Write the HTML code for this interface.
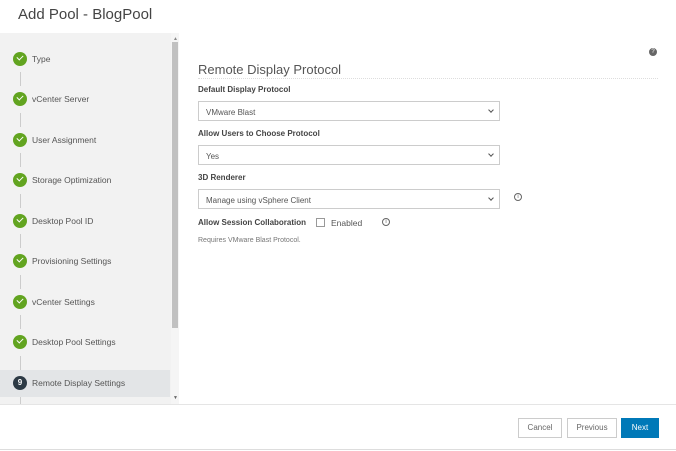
<!DOCTYPE html>
<html><head><style>
*{box-sizing:border-box;margin:0;padding:0}
body{width:676px;height:451px;background:#fff;font-family:"Liberation Sans",sans-serif;position:relative;overflow:hidden;color:#333}
.hdr{position:absolute;left:18px;top:6px;font-size:15px;color:#444}
.left{position:absolute;left:0;top:33px;width:171px;height:371px;background:#f2f2f2}
.sb{position:absolute;left:171px;top:33px;width:8px;height:371px;background:#f5f5f5}
.thumb{position:absolute;left:172px;top:42px;width:6px;height:286px;background:#c1c1c1}
.step{position:absolute;left:0;width:170px;height:26px;font-size:8.5px;color:#555}
.step .c{position:absolute;left:13px;top:6px;width:14px;height:14px;border-radius:50%;background:#62a420}
.step .c:after{content:"";position:absolute;left:4px;top:3px;width:5px;height:3px;border-left:1.3px solid #fff;border-bottom:1.3px solid #fff;transform:rotate(-45deg)}
.step span{position:absolute;left:32px;top:8px}
.ln{position:absolute;left:20px;width:1px;height:14px;background:#ccc}
.act{background:#e3e5e7}
.act .c{background:#2d3a45}
.act .c:after{display:none}
.act .c b{position:absolute;width:14px;text-align:center;top:2px;color:#fff;font-size:8px}
.title{position:absolute;left:198px;top:62px;font-size:13px;color:#555}
.dl{position:absolute;left:198px;top:78px;width:460px;border-top:1px dotted #ddd}
.lab{position:absolute;left:198px;font-size:8px;font-weight:bold;color:#444}
.sel{position:absolute;left:198px;width:302px;height:20px;border:1px solid #ccc;font-size:8px;color:#555;padding:6px 7px}
.sel:after{content:"";position:absolute;right:6px;top:6px;width:3px;height:3px;border-right:1px solid #555;border-bottom:1px solid #555;transform:rotate(45deg)}
.i{position:absolute;width:8px;height:8px;border:1px solid #666;border-radius:50%;font-size:6px;text-align:center;line-height:6px;color:#666}
.btn{position:absolute;top:418px;height:20px;border:1px solid #ccc;font-size:8px;color:#666;text-align:center;line-height:18px;background:#fff}
</style></head><body>
<div class="hdr">Add Pool - BlogPool</div>
<div class="left"></div>
<div class="sb"></div><div class="thumb"></div>
<div style="position:absolute;left:173px;top:36px;font-size:5px;color:#888">▲</div>
<div style="position:absolute;left:173px;top:395px;font-size:5px;color:#666">▼</div>
<div class="step" style="top:46px"><div class="c"></div><span>Type</span></div>
<div class="ln" style="top:72px"></div>
<div class="step" style="top:86px"><div class="c"></div><span>vCenter Server</span></div>
<div class="ln" style="top:113px"></div>
<div class="step" style="top:127px"><div class="c"></div><span>User Assignment</span></div>
<div class="ln" style="top:153px"></div>
<div class="step" style="top:167px"><div class="c"></div><span>Storage Optimization</span></div>
<div class="ln" style="top:194px"></div>
<div class="step" style="top:208px"><div class="c"></div><span>Desktop Pool ID</span></div>
<div class="ln" style="top:234px"></div>
<div class="step" style="top:248px"><div class="c"></div><span>Provisioning Settings</span></div>
<div class="ln" style="top:275px"></div>
<div class="step" style="top:289px"><div class="c"></div><span>vCenter Settings</span></div>
<div class="ln" style="top:315px"></div>
<div class="step" style="top:329px"><div class="c"></div><span>Desktop Pool Settings</span></div>
<div class="ln" style="top:356px"></div>
<div class="step act" style="top:370px;height:27px"><div class="c"><b>9</b></div><span>Remote Display Settings</span></div>
<div class="ln" style="top:397px;height:7px"></div>
<div class="i" style="left:649px;top:48px;background:#666;color:#fff;border-color:#666">?</div>
<div class="title">Remote Display Protocol</div>
<div class="dl"></div>
<div class="lab" style="top:85px">Default Display Protocol</div>
<div class="sel" style="top:101px">VMware Blast</div>
<div class="lab" style="top:129px">Allow Users to Choose Protocol</div>
<div class="sel" style="top:145px">Yes</div>
<div class="lab" style="top:173px">3D Renderer</div>
<div class="sel" style="top:189px">Manage using vSphere Client</div>
<div class="i" style="left:514px;top:193px">i</div>
<div class="lab" style="top:218px">Allow Session Collaboration</div>
<div style="position:absolute;left:316px;top:218px;width:9px;height:9px;border:1px solid #999"></div>
<div style="position:absolute;left:331px;top:218px;font-size:8.5px;color:#555">Enabled</div>
<div class="i" style="left:382px;top:218px">i</div>
<div style="position:absolute;left:198px;top:237px;font-size:7px;color:#777">Requires VMware Blast Protocol.</div>
<div style="position:absolute;left:0;top:404px;width:676px;border-top:1px solid #e5e5e5"></div>
<div class="btn" style="left:518px;width:44px">Cancel</div>
<div class="btn" style="left:567px;width:50px">Previous</div>
<div class="btn" style="left:621px;width:38px;background:#0079b8;border-color:#0079b8;color:#fff">Next</div>
<div style="position:absolute;left:0;top:449px;width:676px;border-top:1px solid #ddd"></div>
</body></html>
